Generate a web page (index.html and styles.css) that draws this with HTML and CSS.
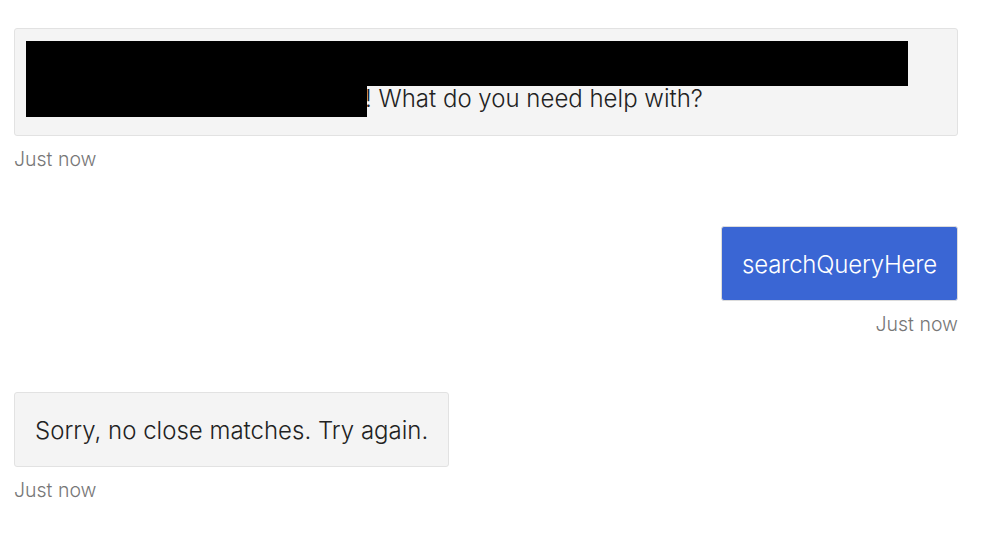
FILE: index.html
```html
<!DOCTYPE html>
<html lang="en">
<head>
<meta charset="utf-8">
<title>Chat</title>
<link rel="stylesheet" href="styles.css">
</head>
<body>
<div class="chat">
  <div class="msg bot">
    <div class="bubble wide">
      <div class="redact r1"></div>
      <div class="redact r2"></div>
      <div class="line blank">&nbsp;</div>
      <div class="line"><span class="spacer"></span>! What do you need help with?</div>
    </div>
    <div class="time">Just now</div>
  </div>
  <div class="msg user">
    <div class="bubble blue">searchQueryHere</div>
    <div class="time">Just now</div>
  </div>
  <div class="msg bot">
    <div class="bubble">Sorry, no close matches. Try again.</div>
    <div class="time">Just now</div>
  </div>
</div>
</body>
</html>
```

FILE: styles.css
```css
html, body {
  margin: 0;
  padding: 0;
  background: #ffffff;
}

body {
  font-family: Inter, "Liberation Sans", Arial, sans-serif;
  font-weight: 300;
  color: #222222;
}

.chat {
  width: 944px;
  padding: 28px 0 0 14px;
  display: flex;
  flex-direction: column;
}

.msg {
  display: flex;
  flex-direction: column;
  align-items: flex-start;
  margin-bottom: 55px;
}

.msg.user {
  align-items: flex-end;
  margin-bottom: 56px;
}

.bubble {
  position: relative;
  background: #f4f4f4;
  border: 1px solid #e2e2e2;
  border-radius: 3px;
  padding: 21px 20px 19px;
  font-size: 24px;
  line-height: 33px;
}

.bubble.wide {
  align-self: stretch;
  padding-top: 20px;
  padding-bottom: 20px;
}

.bubble.blue {
  background: #3a66d4;
  color: #ffffff;
  border-color: #dcdcdc;
  letter-spacing: -0.2px;
}

.line {
  white-space: nowrap;
}

.spacer {
  display: inline-block;
  width: 330px;
}

.redact {
  position: absolute;
  background: #000000;
}

.r1 {
  left: 11px;
  top: 12px;
  width: 882px;
  height: 45px;
}

.r2 {
  left: 11px;
  top: 57px;
  width: 341px;
  height: 31px;
}

.time {
  margin-top: 11px;
  font-size: 19.5px;
  line-height: 24px;
  color: #777777;
}
```
